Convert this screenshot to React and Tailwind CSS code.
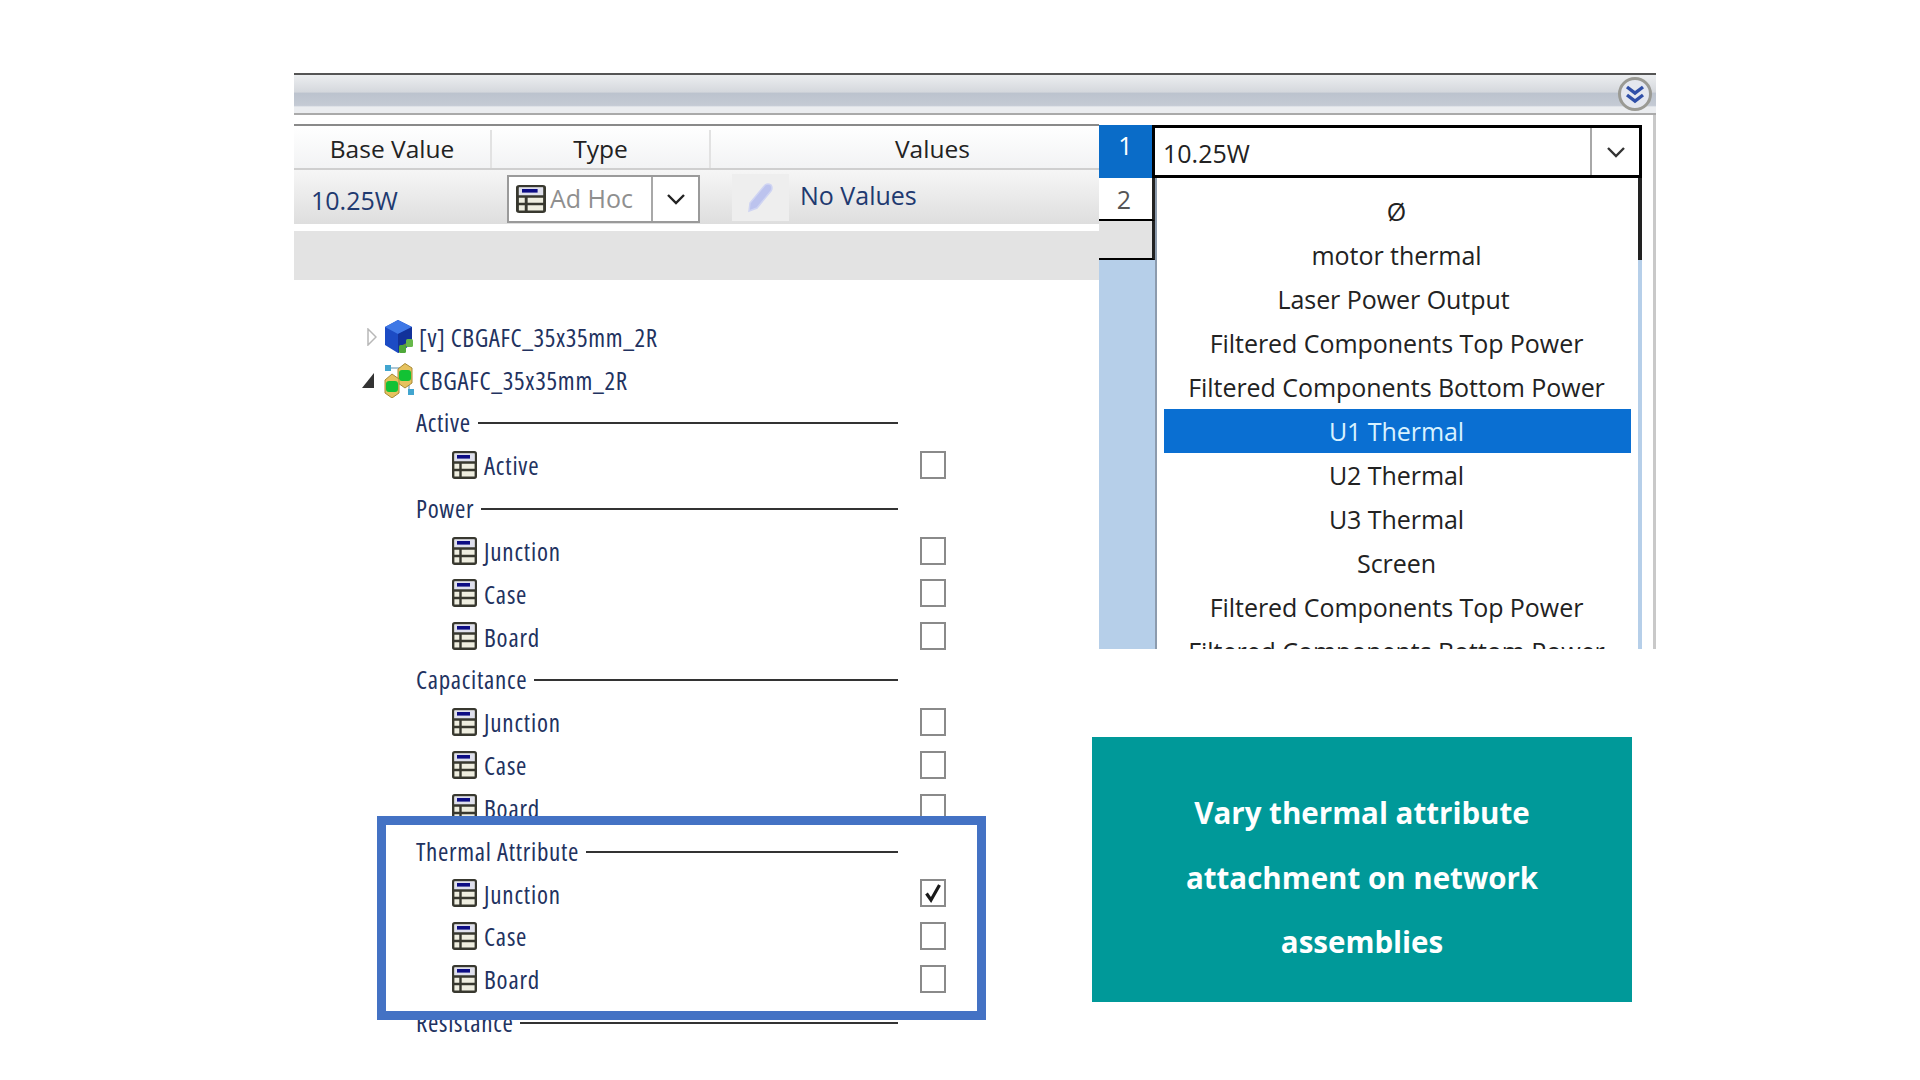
import React from "react";

const TableIcon = ({ className = "w-[25px] h-[28px]" }) => (
  <svg viewBox="0 0 25 28" preserveAspectRatio="none" className={className + " shrink-0"}>
    <rect x="1.2" y="1.2" width="22.6" height="25.6" rx="1.5" fill="#efeee0" stroke="#38382f" strokeWidth="2.4" />
    <rect x="2.4" y="2.4" width="20.2" height="8.6" fill="#dfe0ec" />
    <rect x="5" y="4" width="13" height="3.6" fill="#0c0c84" />
    <path d="M1 11.5H24M1 19H24M8.5 11.5V27" stroke="#38382f" strokeWidth="2.4" fill="none" />
  </svg>
);

const CubeIcon = () => (
  <svg viewBox="0 0 30 36" className="w-[30px] h-[36px] shrink-0">
    <path d="M14 1 L28 8 V25 L14 34 L1 26 V8 Z" fill="#1c4bc4" />
    <path d="M14 1 L28 8 L14 15 L1 8 Z" fill="#3f78e6" />
    <path d="M14 15 L28 8 V25 L14 34 Z" fill="#12329a" />
    <path d="M17 28 L25 24" stroke="#6f8a3a" strokeWidth="2" />
    <rect x="15" y="26" width="7" height="8" rx="1.5" fill="#4fa83a" />
    <rect x="22" y="20" width="7" height="8" rx="1.5" fill="#66b84a" />
  </svg>
);

const NetworkIcon = () => (
  <svg viewBox="0 0 30 35" className="w-[30px] h-[35px] shrink-0">
    <path d="M5 5H25V30" stroke="#8fb4c8" strokeWidth="1.5" fill="none" />
    <rect x="1" y="2" width="6" height="6" fill="#42a5cf" />
    <rect x="24" y="26" width="6" height="6" fill="#42a5cf" />
    <path d="M14 6 L21 0.5 L28 5 V20 L21 25 L14 20 Z" fill="#e6c25e" stroke="#a88a36" />
    <rect x="15" y="7" width="12" height="11" rx="3" fill="#12c234" />
    <path d="M1 17 L8 11 L15 16 V30 L8 35 L1 30 Z" fill="#e6c25e" stroke="#a88a36" />
    <rect x="2" y="18" width="12" height="11" rx="3" fill="#12c234" />
  </svg>
);

const Check = ({ on }) => (
  <span className="w-[26px] h-[28px] mb-[2px] border-2 border-[#8a8a8a] bg-white flex items-center justify-center shrink-0">
    {on && (
      <svg viewBox="0 0 20 22" className="w-[20px] h-[22px]">
        <path d="M3.5 11.5 L8 18 L16.5 3" stroke="#1a1a1a" strokeWidth="3.2" fill="none" />
      </svg>
    )}
  </span>
);

const Heading = ({ label }) => (
  <div className="flex items-center h-[42.85px] w-[604px] pl-[122px] gap-[7px]">
    <span className="text-[25px] [font-stretch:80%] tracking-[0.7px] text-[#22325f] whitespace-nowrap">{label}</span>
    <span className="flex-1 h-[2px] bg-[#333]" />
  </div>
);

const Item = ({ label, on }) => (
  <div className="flex items-center justify-between h-[42.85px] w-[652px] pl-[158px]">
    <span className="flex items-center gap-[7px]">
      <span className="mb-[2px]">
        <TableIcon />
      </span>
      <span className="text-[25px] [font-stretch:80%] tracking-[0.8px] text-[#22325f]">{label}</span>
    </span>
    <Check on={on} />
  </div>
);

const Group = ({ label, items, on }) => (
  <>
    <Heading label={label} />
    {items.map((t) => (
      <Item key={t} label={t} on={on === t} />
    ))}
  </>
);

const Chevron = ({ className, color = "#222" }) => (
  <svg viewBox="0 0 20 12" className={className}>
    <path d="M2 2 L10 10 L18 2" stroke={color} strokeWidth="2.4" fill="none" />
  </svg>
);

const options = [
  { t: "Ø", c: "pr-[2px]" },
  { t: "motor thermal", c: "pr-[2px]" },
  { t: "Laser Power Output", c: "pr-[8px]" },
  { t: "Filtered Components Top Power", c: "pr-[2px]" },
  { t: "Filtered Components Bottom Power", c: "pr-[2px]" },
  { t: "U1 Thermal", c: "pr-[2px] bg-[#0a6fd2] text-[#d8f2ff]" },
  { t: "U2 Thermal", c: "pr-[2px]" },
  { t: "U3 Thermal", c: "pr-[2px]" },
  { t: "Screen", c: "pr-[2px]" },
  { t: "Filtered Components Top Power", c: "pr-[2px]" },
  { t: "Filtered Components Bottom Power", c: "pr-[2px]" },
];

export default function App() {
  return (
    <div className="w-[1920px] h-[1080px] overflow-hidden bg-white pt-[73px] pl-[294px] font-['Open_Sans','Noto_Sans',sans-serif]">
      {/* title strip */}
      <div className="relative w-[1362px] h-[42px] border-t-2 border-[#555] bg-[linear-gradient(180deg,#eceef0_0%,#d5d8dd_42%,#bcc3ce_46%,#c4cad4_76%,#ebedf0_80%,#ebedf0_94%,#aaaaaa_95%)]">
        <svg viewBox="0 0 36 36" className="absolute right-[3px] top-[1px] w-[36px] h-[36px]">
          <circle cx="18" cy="18" r="15.5" fill="#e4e7ef" stroke="#9a9a94" strokeWidth="3" />
          <path d="M10 11 L18 17 L26 11 M10 19 L18 25 L26 19" stroke="#2f4fa8" strokeWidth="3.4" fill="none" />
        </svg>
      </div>

      <div className="flex w-[1362px]">
        {/* left column */}
        <div className="w-[805px] shrink-0 pt-[9px]">
          <div className="border-t-2 border-[#8a8a8a]">
            <div className="flex h-[44px] pt-[4px] border-b-2 border-[#cfcfcf] bg-[linear-gradient(180deg,#ffffff,#f2f3f4)] text-[24.5px] [font-stretch:88%] text-[#222]">
              <div className="w-[198px] flex items-center justify-center border-r-2 border-[#e2e2e2]">Base Value</div>
              <div className="w-[219px] flex items-center justify-center border-r-2 border-[#e2e2e2]">Type</div>
              <div className="flex-1 flex items-center pl-[184px]">Values</div>
            </div>
            <div className="flex items-center h-[54px] bg-[linear-gradient(180deg,#f6f6f6,#dedede)]">
              <div className="w-[213px] pl-[17px] pt-[7px] text-[25px] [font-stretch:88%] text-[#1f3a70]">10.25W</div>
              <div className="w-[193px] h-[48px] mt-[4px] flex border-2 border-[#9a9a9a] bg-white">
                <div className="flex-1 flex items-center pl-[7px] gap-[4px] border-r-2 border-[#a8a8a8]">
                  <TableIcon className="w-[30px] h-[28px]" />
                  <span className="text-[25px] [font-stretch:88%] text-[#8f8f8f] whitespace-nowrap">Ad Hoc</span>
                </div>
                <div className="w-[45px] flex items-center justify-center">
                  <Chevron className="w-[20px] h-[12px]" />
                </div>
              </div>
              <div className="ml-[32px] w-[57px] h-[47px] bg-[#eeeeee] flex items-center justify-center">
                <svg viewBox="0 0 30 32" className="w-[30px] h-[32px]">
                  <path d="M4 22 L19 4 Q22 2 25 4 Q27 7 25 10 L11 27 L3 30 Z" fill="#bcc3ee" stroke="#cfd4f2" strokeWidth="1.5" />
                </svg>
              </div>
              <div className="ml-[11px] -mt-[3px] text-[25px] [font-stretch:88%] text-[#1f3a70] whitespace-nowrap">No Values</div>
            </div>
          </div>
          <div className="h-[7px] bg-white" />
          <div className="h-[49px] bg-[#e3e3e3]" />

          {/* tree */}
          <div className="relative mt-[36px]">
            <div className="flex items-center h-[42.85px] pl-[73px]">
              <svg viewBox="0 0 10 18" className="w-[10px] h-[18px] shrink-0">
                <path d="M1 1 L9 9 L1 17 Z" fill="#fff" stroke="#b8b8b8" strokeWidth="1.5" />
              </svg>
              <span className="ml-[7px]"><CubeIcon /></span>
              <span className="ml-[5px] text-[25px] [font-stretch:80%] tracking-[0.6px] text-[#22325f] whitespace-nowrap">[v] CBGAFC_35x35mm_2R</span>
            </div>
            <div className="flex items-center h-[42.85px] pl-[68px]">
              <svg viewBox="0 0 12 15" className="w-[12px] h-[15px] shrink-0">
                <path d="M12 0 V15 H0 Z" fill="#333" />
              </svg>
              <span className="ml-[10px]"><NetworkIcon /></span>
              <span className="ml-[5px] text-[25px] [font-stretch:80%] tracking-[0.7px] text-[#22325f] whitespace-nowrap">CBGAFC_35x35mm_2R</span>
            </div>
            <Group label="Active" items={["Active"]} />
            <Group label="Power" items={["Junction", "Case", "Board"]} />
            <Group label="Capacitance" items={["Junction", "Case", "Board"]} />
            <Group label="Thermal Attribute" items={["Junction", "Case", "Board"]} on="Junction" />
            <Group label="Resistance" items={[]} />
            {/* callout frame */}
            <div className="absolute left-[83px] top-[500px] w-[609px] h-[204px] border-[9px] border-[#4472c4]" />
          </div>
        </div>

        {/* right column */}
        <div className="w-[557px] shrink-0">
          <div className="h-[534px] pt-[10px] border-r-[3px] border-[#c9c9c9] bg-white">
            <div className="flex h-[524px] overflow-hidden">
              <div className="w-[56px] shrink-0 flex flex-col text-[25px] [font-stretch:88%]">
                <div className="h-[53px] bg-[#0a6cc8] text-white flex justify-center pt-[2px] pr-[3px]">1</div>
                <div className="h-[43px] pt-[3px] bg-white text-[#555] flex items-center justify-center pr-[3px] border-b-2 border-black border-r-[3px] border-r-[#222]">2</div>
                <div className="h-[39px] bg-[#e3e3e3] border-b-2 border-black border-r-[3px] border-r-[#222]" />
                <div className="flex-1 bg-[#b6cfe9]" />
              </div>
              <div className="w-[487px] shrink-0 flex flex-col">
                <div className="relative -ml-[3px] w-[490px] h-[53px] shrink-0 flex border-[3px] border-black bg-white text-[#222]">
                  <div className="flex-1 flex items-center pl-[8px] pt-[4px] text-[25px] [font-stretch:88%]">10.25W</div>
                  <div className="w-[49px] flex items-center justify-center border-l-2 border-[#a8a8a8]">
                    <Chevron className="w-[20px] h-[12px]" color="#333" />
                  </div>
                </div>
                <div className="flex flex-1 min-h-0">
                  <div className="flex-1 min-w-0 border-l-2 border-[#8c9bad] bg-white pt-[11px] px-[7px] text-[25px] [font-stretch:88%] tracking-[-0.05px] text-[#222] text-center">
                    {options.map((o, i) => (
                      <div key={i} className={"h-[44px] leading-[44px] whitespace-nowrap " + o.c}>
                        {o.t}
                      </div>
                    ))}
                  </div>
                  <div className="w-[4px] shrink-0 flex flex-col">
                    <div className="h-[82px] bg-[#222]" />
                    <div className="flex-1 bg-[#b6cfe9]" />
                  </div>
                </div>
              </div>
            </div>
          </div>

          <div className="mt-[88px] -ml-[7px] w-[540px] h-[265px] pt-[17px] bg-[#009999] flex flex-col items-center justify-center text-white font-bold text-[29.5px] leading-[64.5px] [font-stretch:88%] text-center">
            <div>Vary thermal attribute</div>
            <div>attachment on network</div>
            <div>assemblies</div>
          </div>
        </div>
      </div>
    </div>
  );
}
